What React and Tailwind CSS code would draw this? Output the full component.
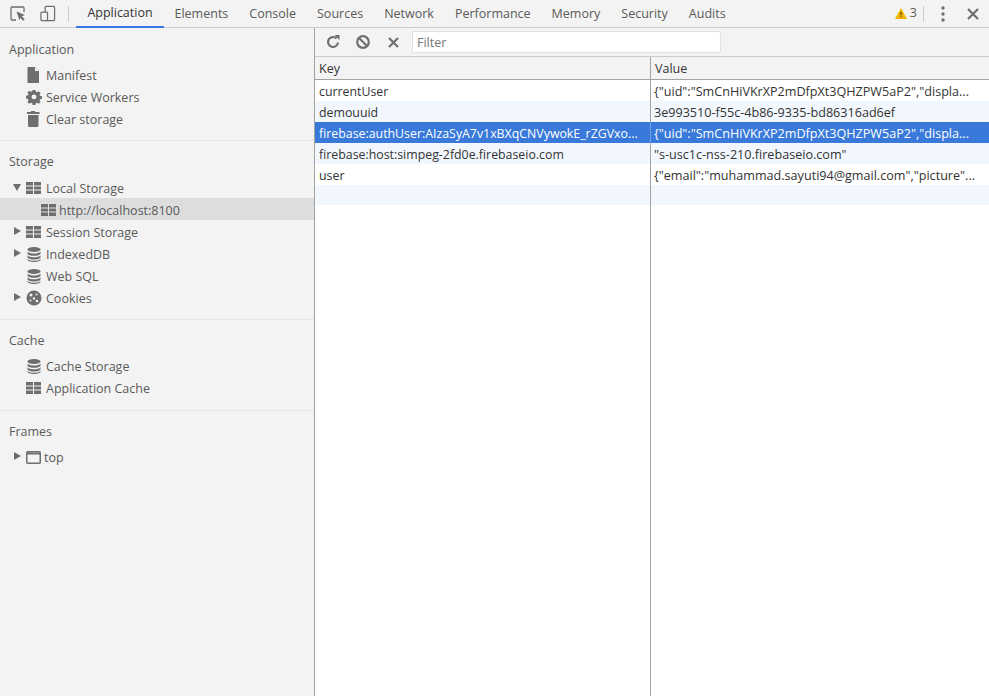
import React from 'react';

const font = "font-['Open_Sans','Noto_Sans',sans-serif]";

const FileIcon = () => (
  <svg width="14" height="16" viewBox="0 0 14 16" className="fill-[#6e6e6e]">
    <path d="M.5 0h7.500L12 4v12H.5z" />
    <path d="M8 0v4h4z" className="fill-[#f3f3f3]" />
  </svg>
);

const GearIcon = () => (
  <svg width="16" height="16" viewBox="0 0 16 16" className="fill-[#6e6e6e]">
    <path fillRule="evenodd" d="M6.600 1h2.800l.4 2 1.100.5 1.800-1.100 1.900 2-1.100 1.700.4 1.100 2.100.4v2.800l-2.100.4-.4 1.100 1.100 1.700-1.900 2-1.800-1.100-1.100.5-.4 2H6.600l-.4-2-1.100-.5-1.800 1.100-1.900-2 1.100-1.700-.4-1.100L0 9.800V7l2.100-.4.400-1.100-1.100-1.700 1.900-2 1.800 1.100 1.100-.5zM8 5.900a2.500 2.500 0 1 0 0 5 2.500 2.500 0 0 0 0-5z" transform="scale(1 .95)" />
  </svg>
);

const TrashIcon = () => (
  <svg width="14" height="16" viewBox="0 0 14 16" className="fill-[#6e6e6e]">
    <path d="M4 0h4v1h4.500v2H0V1h4zM1 4h10.500v10.500A1.500 1.500 0 0 1 10 16H2.500A1.500 1.500 0 0 1 1 14.500z" />
  </svg>
);

const TableIcon = () => (
  <svg width="15" height="12" viewBox="0 0 15 12" className="fill-[#6e6e6e]">
    <path d="M0 0h7v3.500H0zM8 0h7v3.500H8zM0 4.500h7v3H0zM8 4.500h7v3H8zM0 8.500h7V12H0zM8 8.500h7V12H8z" />
  </svg>
);

const DbIcon = () => (
  <svg width="14" height="15" viewBox="0 0 14 15" className="fill-[#6e6e6e]">
    <ellipse cx="7" cy="2.500" rx="6.500" ry="2.500" />
    <path d="M.5 4.500C1.500 6 4 6.500 7 6.500s5.500-.5 6.500-2v2.300c-1 1.500-3.500 2-6.500 2s-5.500-.5-6.500-2zM.5 8.200c1 1.500 3.500 2 6.500 2s5.500-.5 6.500-2v2.300c-1 1.500-3.500 2-6.500 2s-5.500-.5-6.500-2zM.5 11.800c1 1.500 3.500 2 6.500 2s5.500-.5 6.500-2v.7C13.500 14 10.500 15 7 15s-6.500-1-6.500-2.500z" />
  </svg>
);

const CookieIcon = () => (
  <svg width="16" height="16" viewBox="0 0 16 16">
    <circle cx="8" cy="8" r="7.500" className="fill-[#6e6e6e]" />
    <circle cx="5" cy="5" r="1.500" fill="#f3f3f3" />
    <circle cx="10.500" cy="4.500" r="1" fill="#f3f3f3" />
    <circle cx="8" cy="8.500" r="1.200" fill="#f3f3f3" />
    <circle cx="4.500" cy="10.500" r="1" fill="#f3f3f3" />
    <circle cx="11" cy="11" r="1.300" fill="#f3f3f3" />
  </svg>
);

const FrameIcon = () => (
  <svg width="15" height="13" viewBox="0 0 15 13" className="fill-none stroke-[#6e6e6e]">
    <rect x="0.750" y="0.750" width="13.500" height="11.500" rx="1" strokeWidth="1.500" />
    <path d="M1 2.500h13" strokeWidth="2" />
  </svg>
);

const Arrow = ({ open }) => (
  <svg width="8" height="8" viewBox="0 0 8 8" className="fill-[#6e6e6e]">
    {open ? <path d="M0 1h8L4 8z" /> : <path d="M1 0l7 4-7 4z" />}
  </svg>
);

const TreeItem = ({ icon, label, arrow, active, indent, low }) => (
  <div className={`flex h-[22px] items-center text-[#5a5a5a] ${low ? 'pt-[2px]' : ''} ${active ? 'bg-[#dddddd]' : ''} ${indent ? 'pl-[41px]' : 'pl-[13px]'}`}>
    {!indent && <span className="flex w-[12px] shrink-0 items-center pb-[2px]">{arrow && <Arrow open={arrow === 'open'} />}</span>}
    <span className={`flex shrink-0 items-center justify-center ${indent ? 'w-[15px]' : 'w-[17px]'}`}>{icon}</span>
    <span className={`whitespace-nowrap pt-[3px] ${indent ? 'ml-[3px]' : 'ml-[4px]'}`}>{label}</span>
  </div>
);

const Section = ({ title, children, last, first }) => (
  <div className={`${last ? '' : 'border-b border-[#e4e4e4]'} ${first ? 'pb-[10px] pt-[10px]' : 'pb-[11px] pt-[9px]'}`}>
    <div className="flex h-[22px] items-center pl-[9px] pt-[2px] text-[#5a5a5a]">{title}</div>
    <div className="mt-[4px]">{children}</div>
  </div>
);

const tabs = ['Application', 'Elements', 'Console', 'Sources', 'Network', 'Performance', 'Memory', 'Security', 'Audits'];

const rows = [
  ['currentUser', '{"uid":"SmCnHiVKrXP2mDfpXt3QHZPW5aP2","displa...'],
  ['demouuid', '3e993510-f55c-4b86-9335-bd86316ad6ef'],
  ['firebase:authUser:AIzaSyA7v1xBXqCNVywokE_rZGVxo...', '{"uid":"SmCnHiVKrXP2mDfpXt3QHZPW5aP2","displa...', true],
  ['firebase:host:simpeg-2fd0e.firebaseio.com', '"s-usc1c-nss-210.firebaseio.com"'],
  ['user', '{"email":"muhammad.sayuti94@gmail.com","picture"...'],
  ['', ''],
];

export default function App() {
  return (
    <div className={`flex h-[696px] w-[989px] flex-col overflow-hidden bg-white text-[12.500px] ${font}`}>
      {/* top tab strip */}
      <div className="flex h-[28px] shrink-0 items-center border-b border-[#cccccc] bg-[#f3f3f3]">
        <div className="ml-[10px] flex w-[16px] items-center justify-center">
          <svg width="16" height="16" viewBox="0 0 16 16" className="fill-none">
            <path d="M6 14H2a1 1 0 0 1-1-1V2a1 1 0 0 1 1-1h11a1 1 0 0 1 1 1v4" stroke="#6e6e6e" strokeWidth="1.300" />
            <path d="M6.500 5.500l8.500 3.500-3.300 1.300 3 3-1.500 1.500-3-3L9.500 14.500z" fill="#6e6e6e" />
          </svg>
        </div>
        <div className="ml-[14px] flex w-[16px] items-center justify-center">
          <svg width="17" height="17" viewBox="0 0 17 17" className="fill-none stroke-[#6e6e6e]" strokeWidth="1.300">
            <rect x="5.500" y="1" width="10" height="15" rx="1" />
            <rect x="1" y="7" width="7" height="9" rx="1" fill="#f3f3f3" />
          </svg>
        </div>
        <div className="ml-[12px] h-[16px] w-px bg-[#cccccc]" />
        <div className="ml-[7px] flex h-full">
          {tabs.map((t, i) => (
            <div key={t} className={`flex h-[28px] items-center px-[10.500px] ${i === 0 ? 'w-[88px] justify-center border-b-2 border-[#3b78e7] text-[#333333]' : 'text-[#5a5a5a]'}`}>
              {t}
            </div>
          ))}
        </div>
        <div className="ml-auto flex items-center">
          <svg width="12" height="11" viewBox="0 0 12 11">
            <path d="M6 0l6 11H0z" fill="#f4b400" />
            <path d="M5.400 4h1.200v3.500H5.400zM5.400 8.300h1.200v1.200H5.400z" fill="#5a4a00" />
          </svg>
          <span className="ml-[3px] text-[#5a5a5a]">3</span>
          <div className="ml-[6px] h-[16px] w-px bg-[#cccccc]" />
          <svg width="4" height="16" viewBox="0 0 4 16" className="ml-[17px] fill-[#6e6e6e]">
            <circle cx="2" cy="2" r="1.700" />
            <circle cx="2" cy="8" r="1.700" />
            <circle cx="2" cy="14" r="1.700" />
          </svg>
          <svg width="12" height="12" viewBox="0 0 12 12" className="ml-[22px] mr-[10px] stroke-[#6e6e6e]" strokeWidth="2.200">
            <path d="M1 1l10 10M11 1L1 11" />
          </svg>
        </div>
      </div>

      <div className="flex min-h-0 flex-1">
        {/* sidebar */}
        <div className="w-[315px] shrink-0 border-r border-[#a3a3a3] bg-[#f3f3f3]">
          <Section title="Application" first>
            <TreeItem icon={<FileIcon />} label="Manifest" />
            <TreeItem icon={<GearIcon />} label="Service Workers" />
            <TreeItem icon={<TrashIcon />} label="Clear storage" />
          </Section>
          <Section title="Storage">
            <TreeItem low icon={<TableIcon />} label="Local Storage" arrow="open" />
            <TreeItem low icon={<TableIcon />} label="http://localhost:8100" active indent />
            <TreeItem low icon={<TableIcon />} label="Session Storage" arrow="closed" />
            <TreeItem low icon={<DbIcon />} label="IndexedDB" arrow="closed" />
            <TreeItem low icon={<DbIcon />} label="Web SQL" />
            <TreeItem low icon={<CookieIcon />} label="Cookies" arrow="closed" />
          </Section>
          <Section title="Cache">
            <TreeItem icon={<DbIcon />} label="Cache Storage" />
            <TreeItem icon={<TableIcon />} label="Application Cache" />
          </Section>
          <Section title="Frames" last>
            <TreeItem icon={<FrameIcon />} label={<span className="-ml-[2px]">top</span>} arrow="closed" />
          </Section>
        </div>

        {/* storage view */}
        <div className="flex min-w-0 flex-1 flex-col">
          <div className="flex h-[29px] shrink-0 items-center border-b border-[#cccccc] bg-[#f3f3f3]">
            <svg width="14" height="14" viewBox="0 0 14 14" className="ml-[11px] fill-none stroke-[#6e6e6e]" strokeWidth="2.200">
              <path d="M12 7.500A5 5 0 1 1 10.500 3.400" />
              <path d="M8.500 0h5v5z" fill="#6e6e6e" stroke="none" />
            </svg>
            <svg width="14" height="14" viewBox="0 0 14 14" className="ml-[16px] fill-none stroke-[#6e6e6e]" strokeWidth="2.200">
              <circle cx="7" cy="7" r="5.800" />
              <path d="M3 3l8 8" />
            </svg>
            <svg width="11" height="11" viewBox="0 0 11 11" className="ml-[18px] stroke-[#6e6e6e]" strokeWidth="2.200">
              <path d="M1 1l9 9M10 1l-9 9" />
            </svg>
            <input
              placeholder="Filter"
              className="ml-[13px] h-[22px] w-[309px] rounded-[2px] border border-[#e0e0e0] bg-white px-[4px] outline-none placeholder:text-[#757575]"
            />
          </div>

          {/* table header */}
          <div className="flex h-[23px] shrink-0 border-b border-[#a3a3a3] bg-[#f3f3f3] text-[#333333]">
            <div className="flex w-[336px] shrink-0 items-center border-r border-[#a3a3a3] pl-[4px] pt-[2px]">Key</div>
            <div className="flex flex-1 items-center pl-[4px] pt-[2px]">Value</div>
          </div>

          <div className="flex flex-1 flex-col">
            {rows.map(([k, v, selected], i) => (
              <div
                key={i}
                className={`flex ${i === 5 ? 'h-[20px]' : 'h-[21px]'} shrink-0 items-center ${selected ? 'bg-[#3879d9] text-white' : i % 2 ? 'bg-[#f2f7fd] text-[#333333]' : 'bg-white text-[#333333]'}`}
              >
                <div className={`flex h-full w-[336px] shrink-0 items-center whitespace-nowrap border-r pl-[4px] pt-[3px] text-[12.350px] ${selected ? 'border-[#6f9de3]' : 'border-[#a3a3a3]'}`}>{k}</div>
                <div className="whitespace-nowrap pl-[3px] pt-[3px] text-[12.600px]">{v}</div>
              </div>
            ))}
            <div className="w-[336px] flex-1 border-r border-[#a3a3a3]" />
          </div>
        </div>
      </div>
    </div>
  );
}
